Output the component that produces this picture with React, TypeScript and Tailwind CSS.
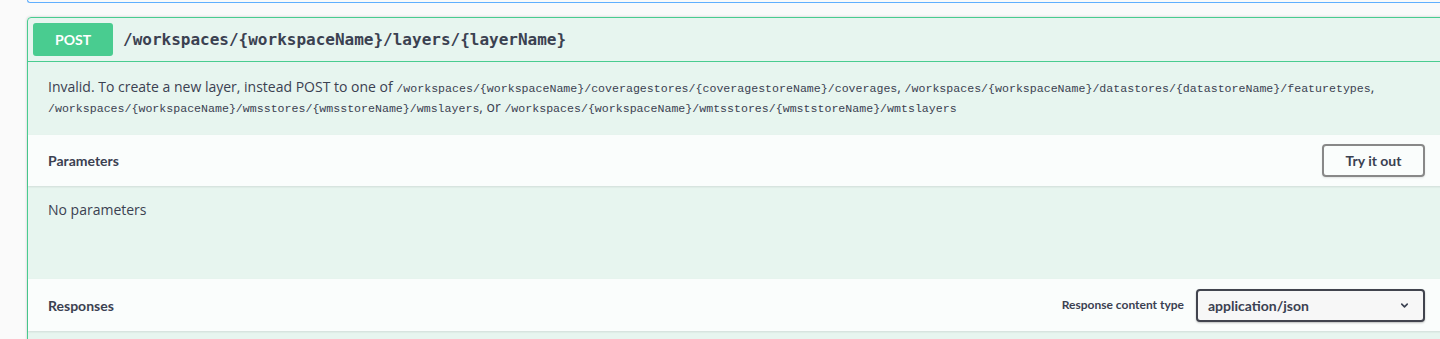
import { ChevronDown } from "lucide-react";

const code = "font-['Liberation_Mono',monospace] text-[11.6px] leading-none";

function Code({ children }: { children: string }) {
  return <code className={code}>{children}</code>;
}

export default function App() {
  return (
    <div className="h-[339px] w-full overflow-hidden bg-[#fafafa] font-['Open_Sans',sans-serif] text-[#3b4151]">
      {/* tail of the previous operation block */}
      <div className="ml-[27px] h-[3px] w-[1419px] rounded-bl-[4px] border-b-[1.5px] border-l-[1.5px] border-[#61affe]" />

      {/* POST operation */}
      <div className="ml-[27px] mt-[14px] w-[1419px] rounded-[4px] border border-[#49cc90] bg-[#49cc90]/10 shadow-[0_0_3px_rgba(0,0,0,0.19)]">
        {/* summary */}
        <div className="flex items-center border-b border-[#49cc90] p-[5px]">
          <span className="flex h-[33px] w-[80px] items-center justify-center rounded-[3px] bg-[#49cc90] font-['Lato',sans-serif] text-[14px] font-bold text-white">
            POST
          </span>
          <span className="pl-[10px] font-['DejaVu_Sans_Mono',monospace] text-[16px] font-bold text-[#3b4151]">
            /workspaces/{"{workspaceName}"}/layers/{"{layerName}"}
          </span>
        </div>

        {/* description */}
        <div className="px-[20px] pb-[18px] pt-[15px] text-[14px] leading-[20px]">
          <p className="whitespace-nowrap leading-[20px]">
            Invalid. To create a new layer, instead POST to one of{" "}
            <Code>{"/workspaces/{workspaceName}/coveragestores/{coveragestoreName}/coverages"}</Code>,{" "}
            <Code>{"/workspaces/{workspaceName}/datastores/{datastoreName}/featuretypes"}</Code>,
            <br />
            <Code>{"/workspaces/{workspaceName}/wmsstores/{wmsstoreName}/wmslayers"}</Code>, or{" "}
            <Code>{"/workspaces/{workspaceName}/wmtsstores/{wmststoreName}/wmtslayers"}</Code>
          </p>
        </div>

        {/* parameters header */}
        <div className="flex h-[51px] items-center justify-between bg-white/80 px-[20px] shadow-[0_1px_2px_rgba(0,0,0,0.1)]">
          <h4 className="font-['Lato',sans-serif] text-[14px] font-bold">Parameters</h4>
          <button className="h-[33px] w-[103px] rounded-[4px] border-2 border-[#888888] bg-transparent font-['Lato',sans-serif] text-[14px] font-bold text-[#3b4151] shadow-[0_1px_2px_rgba(0,0,0,0.1)]">
            Try it out
          </button>
        </div>

        {/* parameters body */}
        <div className="h-[93px] px-[20px] pt-[14px] text-[14px] leading-[20px]">
          <p>No parameters</p>
        </div>

        {/* responses header */}
        <div className="flex h-[52px] items-center justify-between bg-white/80 px-[20px] shadow-[0_1px_2px_rgba(0,0,0,0.1)]">
          <h4 className="font-['Lato',sans-serif] text-[14px] font-bold">Responses</h4>
          <div className="flex items-center gap-[12px]">
            <span className="font-['Lato',sans-serif] text-[12px] font-bold">Response content type</span>
            <div className="flex h-[33px] w-[229px] items-center justify-between rounded-[4px] border-2 border-[#41444e] bg-[#f7f7f7] pl-[10px] pr-[13px] shadow-[0_1px_2px_rgba(0,0,0,0.25)]">
              <span className="font-['Lato',sans-serif] text-[14px] font-bold">application/json</span>
              <ChevronDown className="h-[11px] w-[11px]" strokeWidth={3.5} />
            </div>
          </div>
        </div>

        <div className="h-[20px]" />
      </div>
    </div>
  );
}
